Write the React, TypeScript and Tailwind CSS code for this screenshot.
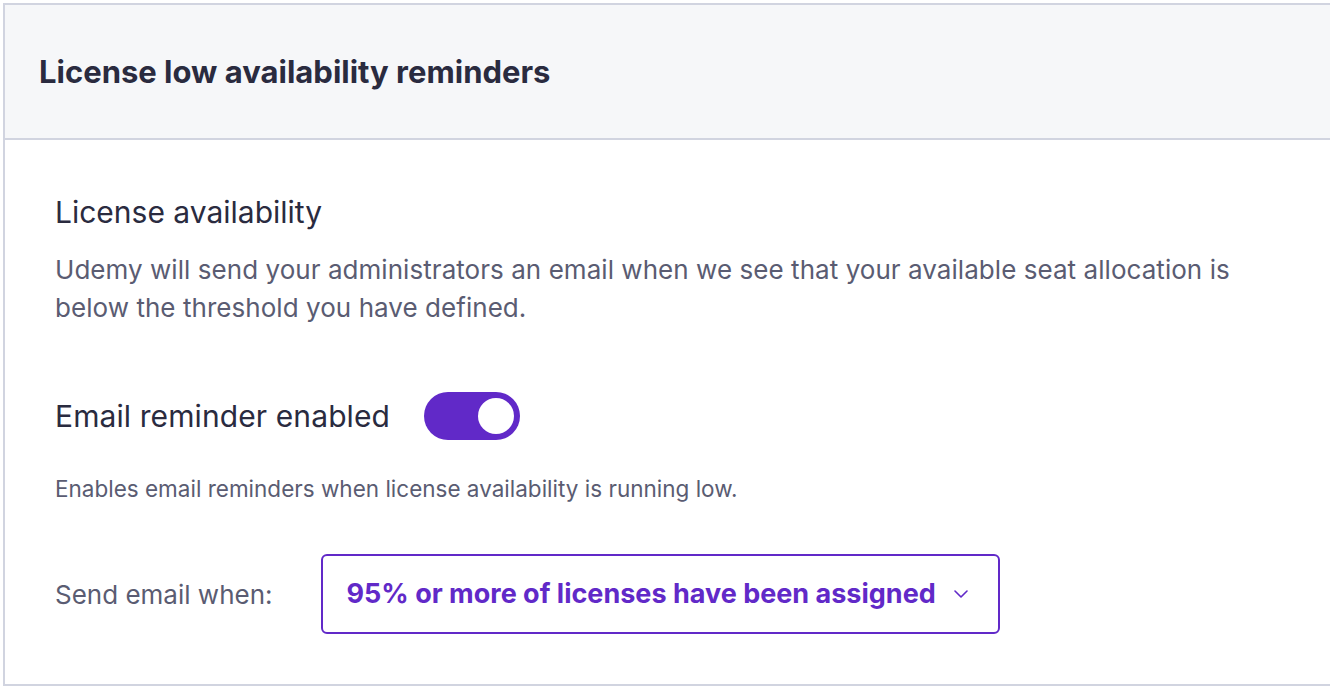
import { useState } from "react";

export default function App() {
  const [enabled, setEnabled] = useState(true);

  return (
    <div className="min-h-screen bg-white pt-[3px] pl-[3px] font-['Inter',sans-serif] text-[#2a2b3f]">
      <div className="flex h-[683px] flex-col border-2 border-r-0 border-[#d1d4e0]">
        <div className="flex h-[135px] items-center border-b-2 border-[#d1d4e0] bg-[#f6f7f9] px-[34px]">
          <h2 className="text-[31px] font-bold leading-[40px]">License low availability reminders</h2>
        </div>

        <div className="flex flex-col px-[50px] pt-[53px]">
          <h3 className="text-[30px] leading-[38px]">License availability</h3>
          <p className="mt-[20px] max-w-[1200px] text-[26px] leading-[38px] tracking-[0.05px] text-[#5a5c72]">
            Udemy will send your administrators an email when we see that your available seat allocation is below
            the threshold you have defined.
          </p>

          <div className="mt-[65px] flex items-center gap-[34px]">
            <span className="text-[30px] leading-[38px] tracking-[0.1px]">Email reminder enabled</span>
            <button
              type="button"
              onClick={() => setEnabled(!enabled)}
              className={`flex h-[48px] w-[96px] items-center rounded-full px-[6px] ${
                enabled ? "justify-end bg-[#6129c8]" : "justify-start bg-[#9194ac]"
              }`}
            >
              <span className="h-[36px] w-[36px] rounded-full bg-white" />
            </button>
          </div>
          <p className="mt-[34px] text-[22.5px] leading-[30px] text-[#5a5c72]">
            Enables email reminders when license availability is running low.
          </p>

          <div className="mt-[50px] flex items-center gap-[48px]">
            <span className="text-[26px] text-[#5a5c72]">Send email when:</span>
            <button
              type="button"
              className="flex h-[80px] w-[679px] items-center gap-[18px] rounded-[6px] border-2 border-[#6129c8] px-[24px] text-[#6129c8]"
            >
              <span className="text-[27px] font-bold">95% or more of licenses have been assigned</span>
              <svg width="14" height="8" viewBox="0 0 14 8" fill="none">
                <path d="M1 1l6 6 6-6" stroke="#6129c8" strokeWidth="1.6" strokeLinecap="round" strokeLinejoin="round" />
              </svg>
            </button>
          </div>
        </div>
      </div>
    </div>
  );
}
